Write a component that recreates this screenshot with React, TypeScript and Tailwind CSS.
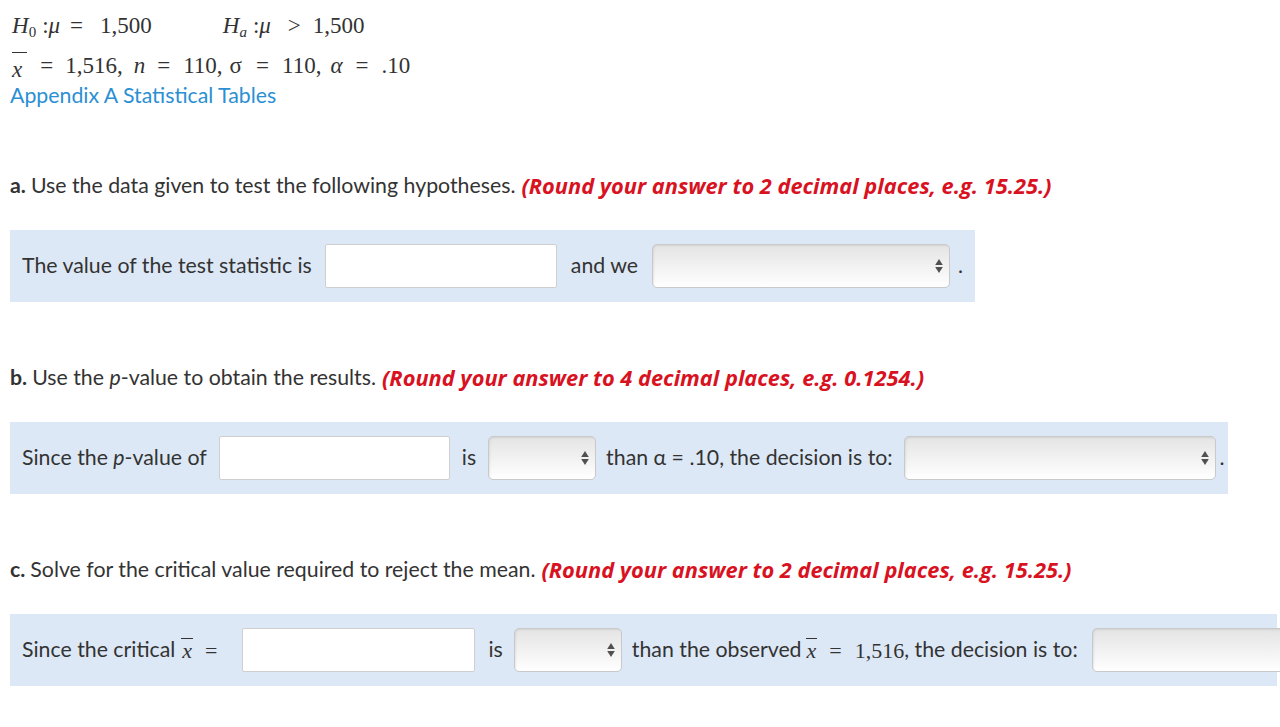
import React from 'react';

const serif = { fontFamily: '"Liberation Serif", "Times New Roman", serif' };
const redFont = { fontFamily: '"Open Sans", Lato, sans-serif' };

function Arrows() {
  return (
    <svg width="8" height="16" viewBox="0 0 8 16" className="shrink-0">
      <path d="M4 1 L7.8 7 H0.2 Z" fill="#505050" />
      <path d="M4 15 L7.8 9 H0.2 Z" fill="#505050" />
    </svg>
  );
}

function TextBox({ w }: { w: string }) {
  return <div className={`h-[44px] ${w} shrink-0 border border-[#cfcfcf] bg-white rounded-[2px]`} />;
}

function Select({ w }: { w: string }) {
  return (
    <div
      className={`h-[44px] ${w} shrink-0 flex items-center justify-end pr-[6px] rounded-[5px] border border-[#c9c9c9] bg-gradient-to-b from-[#e4e4e4] to-white shadow-[inset_1px_1px_2px_rgba(0,0,0,0.08)]`}
    >
      <Arrows />
    </div>
  );
}

// x with a bar over it, followed by "="
function XBar() {
  return (
    <span style={serif} className="text-[22px] flex items-center">
      <span className="italic border-t border-[#333] leading-none inline-block pt-[1px] px-[1px]">x</span>
      <span className="ml-[12px]">=</span>
    </span>
  );
}

function Heading({ label, text, note }: { label: string; text: React.ReactNode; note: string }) {
  return (
    <div className="mt-[62px] h-[28px] flex items-center text-[21.3px] text-[#333] whitespace-nowrap">
      <span className="font-bold">{label}</span>
      <span className="ml-[5px]">{text}</span>
      <span style={redFont} className="ml-[6px] font-bold italic text-[#d8121f] text-[21.8px]">{note}</span>
    </div>
  );
}

export default function App() {
  return (
    <div
      className="w-[1280px] h-[727px] overflow-hidden bg-white text-[#333]"
      style={{ fontFamily: 'Lato, "Open Sans", sans-serif' }}
    >
      <div className="pl-[10px]">
        {/* Hypotheses */}
        <div style={serif} className="mt-[6px] h-[40px] leading-[40px] text-[23px] whitespace-nowrap pl-[2px]">
          <span className="italic">H</span>
          <sub className="text-[15px]">0</sub>
          <span className="ml-[6px]">:</span>
          <span className="italic">μ</span>
          <span className="ml-[10px]">=</span>
          <span className="ml-[17px]">1,500</span>
          <span className="ml-[71px] italic">H</span>
          <sub className="text-[15px] italic">a</sub>
          <span className="ml-[6px]">:</span>
          <span className="italic">μ</span>
          <span className="ml-[17px]">&gt;</span>
          <span className="ml-[12px]">1,500</span>
        </div>
        <div style={serif} className="h-[40px] flex items-center text-[23px] whitespace-nowrap pl-[2px]">
          <span className="italic border-t border-[#333] leading-none inline-block pt-[5px] pr-[5px]">x</span>
          <span className="ml-[13px]">=</span>
          <span className="ml-[12px]">1,516,</span>
          <span className="ml-[11px] italic">n</span>
          <span className="ml-[12px]">=</span>
          <span className="ml-[13px]">110,</span>
          <span className="ml-[7px]">σ</span>
          <span className="ml-[14px]">=</span>
          <span className="ml-[13px]">110,</span>
          <span className="ml-[9px] italic">α</span>
          <span className="ml-[13px]">=</span>
          <span className="ml-[13px]">.10</span>
        </div>
        <div className="h-[28px] -mt-[4px] flex items-center text-[21.3px] text-[#2b8fd3]">
          Appendix A Statistical Tables
        </div>

        {/* Part a */}
        <Heading
          label="a."
          text="Use the data given to test the following hypotheses."
          note="(Round your answer to 2 decimal places, e.g. 15.25.)"
        />
        <div className="mt-[30px] h-[72px] w-[965px] bg-[#dde8f6] flex items-center pl-[12px] text-[21.3px] whitespace-nowrap">
          <span>The value of the test statistic is</span>
          <span className="ml-[13px]"><TextBox w="w-[232px]" /></span>
          <span className="ml-[14px]">and we</span>
          <span className="ml-[14px]"><Select w="w-[298px]" /></span>
          <span className="ml-[8px]">.</span>
        </div>

        {/* Part b */}
        <Heading
          label="b."
          text={<>Use the <i>p</i>-value to obtain the results.</>}
          note="(Round your answer to 4 decimal places, e.g. 0.1254.)"
        />
        <div className="mt-[30px] h-[72px] w-[1218px] bg-[#dde8f6] flex items-center pl-[12px] text-[21.3px] whitespace-nowrap">
          <span>Since the <i>p</i>-value of</span>
          <span className="ml-[12px]"><TextBox w="w-[231px]" /></span>
          <span className="ml-[12px]">is</span>
          <span className="ml-[12px]"><Select w="w-[108px]" /></span>
          <span className="ml-[10px]">than α = .10, the decision is to:</span>
          <span className="ml-[11px]"><Select w="w-[312px]" /></span>
          <span className="ml-[4px]">.</span>
        </div>

        {/* Part c */}
        <Heading
          label="c."
          text="Solve for the critical value required to reject the mean."
          note="(Round your answer to 2 decimal places, e.g. 15.25.)"
        />
        <div className="mt-[30px] h-[72px] w-[1267px] bg-[#dde8f6] flex items-center pl-[12px] text-[21.3px] whitespace-nowrap">
          <span className="flex items-center">
            Since the critical<span className="ml-[6px]"><XBar /></span>
          </span>
          <span className="ml-[25px]"><TextBox w="w-[233px]" /></span>
          <span className="ml-[13px]">is</span>
          <span className="ml-[11px]"><Select w="w-[108px]" /></span>
          <span className="ml-[10px] flex items-center">
            than the observed<span className="ml-[4px]"><XBar /></span>
            <span style={serif} className="ml-[13px] text-[22px]">1,516</span>, the decision is to:
          </span>
          <span className="ml-[14px]"><Select w="w-[300px]" /></span>
        </div>
      </div>
    </div>
  );
}
